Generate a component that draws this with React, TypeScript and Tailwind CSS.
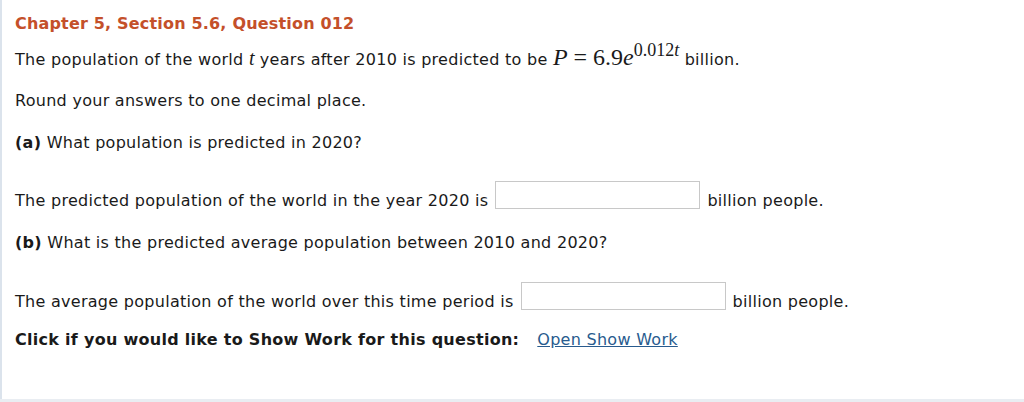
import React from 'react';

function AnswerBox() {
  return (
    <span className="mx-[7px] inline-block h-[28px] w-[205px] border border-[#c8c8c8] bg-white align-[-3px]" />
  );
}

const serif = { fontFamily: '"Liberation Serif", "Times New Roman", serif' };

export default function App() {
  return (
    <div className="h-[402px] w-[1024px] bg-[#e9edf2]">
      <div
        className="h-[399px] border-l-2 border-[#dbe3ec] bg-white pl-[13px] pt-[13px] text-[16px] tracking-[0.28px] text-[#1a1a1a]"
        style={{ fontFamily: '"DejaVu Sans", Verdana, sans-serif' }}
      >
        <h1 className="text-[16px] font-bold leading-[22px] tracking-[0.18px] text-[#c4502a]">
          Chapter 5, Section 5.6, Question 012
        </h1>

        <p className="mt-[9px] leading-[26px]">
          The population of the world{' '}
          <i className="text-[20px] tracking-normal" style={serif}>t</i> years after 2010 is predicted to be{' '}
          <span className="text-[24px] tracking-normal" style={serif}>
            <i>P</i>&nbsp;=&nbsp;6.9<i>e</i>
            <sup className="text-[18px]">
              0.012<i>t</i>
            </sup>
          </span>{' '}
          billion.
        </p>

        <p className="mt-[18px] leading-[20px]">Round your answers to one decimal place.</p>

        <p className="mt-[22px] leading-[20px]">
          <b>(a)</b> What population is predicted in 2020?
        </p>

        <p className="mt-[28px] leading-[26px]">
          The predicted population of the world in the year 2020 is
          <AnswerBox />
          billion people.
        </p>

        <p className="mt-[19px] leading-[20px]">
          <b>(b)</b> What is the predicted average population between 2010 and 2020?
        </p>

        <p className="mt-[29px] leading-[26px]">
          The average population of the world over this time period is
          <AnswerBox />
          billion people.
        </p>

        <p className="mt-[15px] leading-[20px]">
          <b>Click if you would like to Show Work for this question:</b>
          <a href="#" className="ml-[18px] text-[#285b8e] underline">
            Open Show Work
          </a>
        </p>
      </div>
    </div>
  );
}
